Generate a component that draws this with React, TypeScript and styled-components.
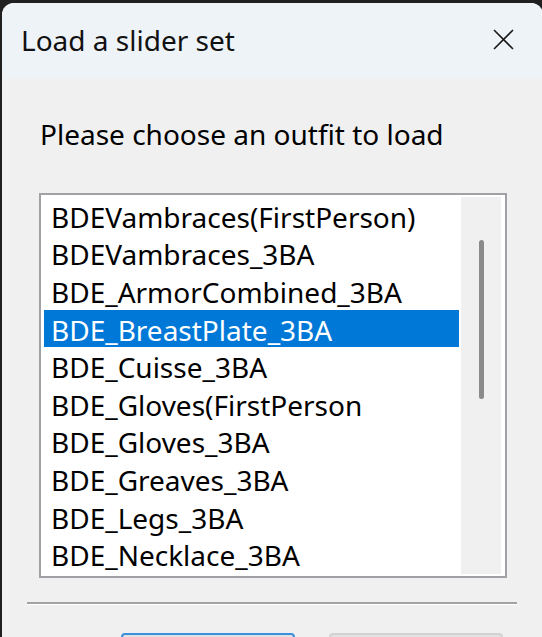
import React from "react";
import styled, { createGlobalStyle } from "styled-components";

const GlobalStyle = createGlobalStyle`
  html, body {
    margin: 0;
    padding: 0;
    background: #202020;
    overflow: hidden;
  }
  * { box-sizing: border-box; }
`;

const Screen = styled.div`
  width: 542px;
  height: 637px;
  padding: 3px 0 0 2px;
  overflow: hidden;
  background: #202020;
`;

const Window = styled.div`
  width: 541px;
  height: 700px;
  background: #f0f0f0;
  border-radius: 12px 12px 0 0;
  overflow: hidden;
  display: flex;
  flex-direction: column;
`;

const TitleBar = styled.div`
  height: 76px;
  flex: none;
  background: #eef3f8;
  display: flex;
  align-items: center;
  justify-content: space-between;
  padding: 0 29px 0 19px;
`;

const Title = styled.div`
  font-family: "Noto Sans", "Segoe UI", sans-serif;
  font-size: 28px;
  color: #111;
  line-height: 1;
  padding-bottom: 2px;
`;

const CloseIcon = styled.svg`
  width: 21px;
  height: 21px;
  display: block;
  margin-bottom: 3px;
`;

const Body = styled.div`
  display: flex;
  flex-direction: column;
  padding: 36px 0 0 0;
`;

const Label = styled.div`
  font-family: "Noto Sans", "Segoe UI", sans-serif;
  font-size: 28px;
  line-height: 38px;
  color: #000;
  margin-left: 38px;
`;

const ListBox = styled.div`
  margin: 40px 0 0 37px;
  width: 468px;
  height: 385px;
  border: 2px solid #9fa1a5;
  background: #fff;
  display: flex;
  padding: 2px 0;
`;

const Items = styled.div`
  flex: 1;
  padding: 0 2px 0 3px;
  display: flex;
  flex-direction: column;
`;

const Row = styled.div<{ $selected?: boolean }>`
  height: 37.6px;
  flex: none;
  display: flex;
  align-items: center;
  padding-left: 7px;
  padding-top: 2px;
  font-family: "Noto Sans", "Segoe UI", sans-serif;
  font-size: 28px;
  white-space: nowrap;
  color: ${(p) => (p.$selected ? "#fff" : "#000")};
  background: ${(p) => (p.$selected ? "#0078d7" : "transparent")};
`;

const Track = styled.div`
  width: 40px;
  flex: none;
  margin-right: 4px;
  background: #f0f0f0;
  display: flex;
  justify-content: center;
  padding-top: 43px;
`;

const Thumb = styled.div`
  width: 5px;
  height: 159px;
  border-radius: 3px;
  background: #8a8a8a;
`;

const Separator = styled.div`
  margin: 24px 0 0 25px;
  width: 490px;
  border-top: 2px solid #a3a3a3;
  border-bottom: 1px solid #ffffff;
`;

const Buttons = styled.div`
  display: flex;
  gap: 34px;
  margin: 28px 0 0 119px;
`;

const Button = styled.button<{ $primary?: boolean }>`
  width: 174px;
  height: 46px;
  padding: 0;
  display: flex;
  align-items: center;
  justify-content: center;
  background: #e1e1e1;
  border: ${(p) => (p.$primary ? "2px solid #3c8fdd" : "2px solid #d2d2d2")};
  border-radius: 4px;
`;

const ButtonText = styled.span`
  display: block;
  font-family: "Noto Sans", "Segoe UI", sans-serif;
  font-size: 26px;
  line-height: 28px;
  color: #000;
`;

const items = [
  "BDEVambraces(FirstPerson)",
  "BDEVambraces_3BA",
  "BDE_ArmorCombined_3BA",
  "BDE_BreastPlate_3BA",
  "BDE_Cuisse_3BA",
  "BDE_Gloves(FirstPerson",
  "BDE_Gloves_3BA",
  "BDE_Greaves_3BA",
  "BDE_Legs_3BA",
  "BDE_Necklace_3BA",
];

export default function App() {
  return (
    <>
      <GlobalStyle />
      <Screen>
        <Window>
          <TitleBar>
            <Title>Load a slider set</Title>
            <CloseIcon viewBox="0 0 21 21">
              <path d="M1 1 L20 20 M20 1 L1 20" stroke="#1b1b1b" strokeWidth="1.6" fill="none" />
            </CloseIcon>
          </TitleBar>
          <Body>
            <Label>Please choose an outfit to load</Label>
            <ListBox>
              <Items>
                {items.map((it, i) => (
                  <Row key={it} $selected={i === 3}>
                    {it}
                  </Row>
                ))}
              </Items>
              <Track>
                <Thumb />
              </Track>
            </ListBox>
            <Separator />
            <Buttons>
              <Button $primary>
                <ButtonText>OK</ButtonText>
              </Button>
              <Button>
                <ButtonText>Cancel</ButtonText>
              </Button>
            </Buttons>
          </Body>
        </Window>
      </Screen>
    </>
  );
}
